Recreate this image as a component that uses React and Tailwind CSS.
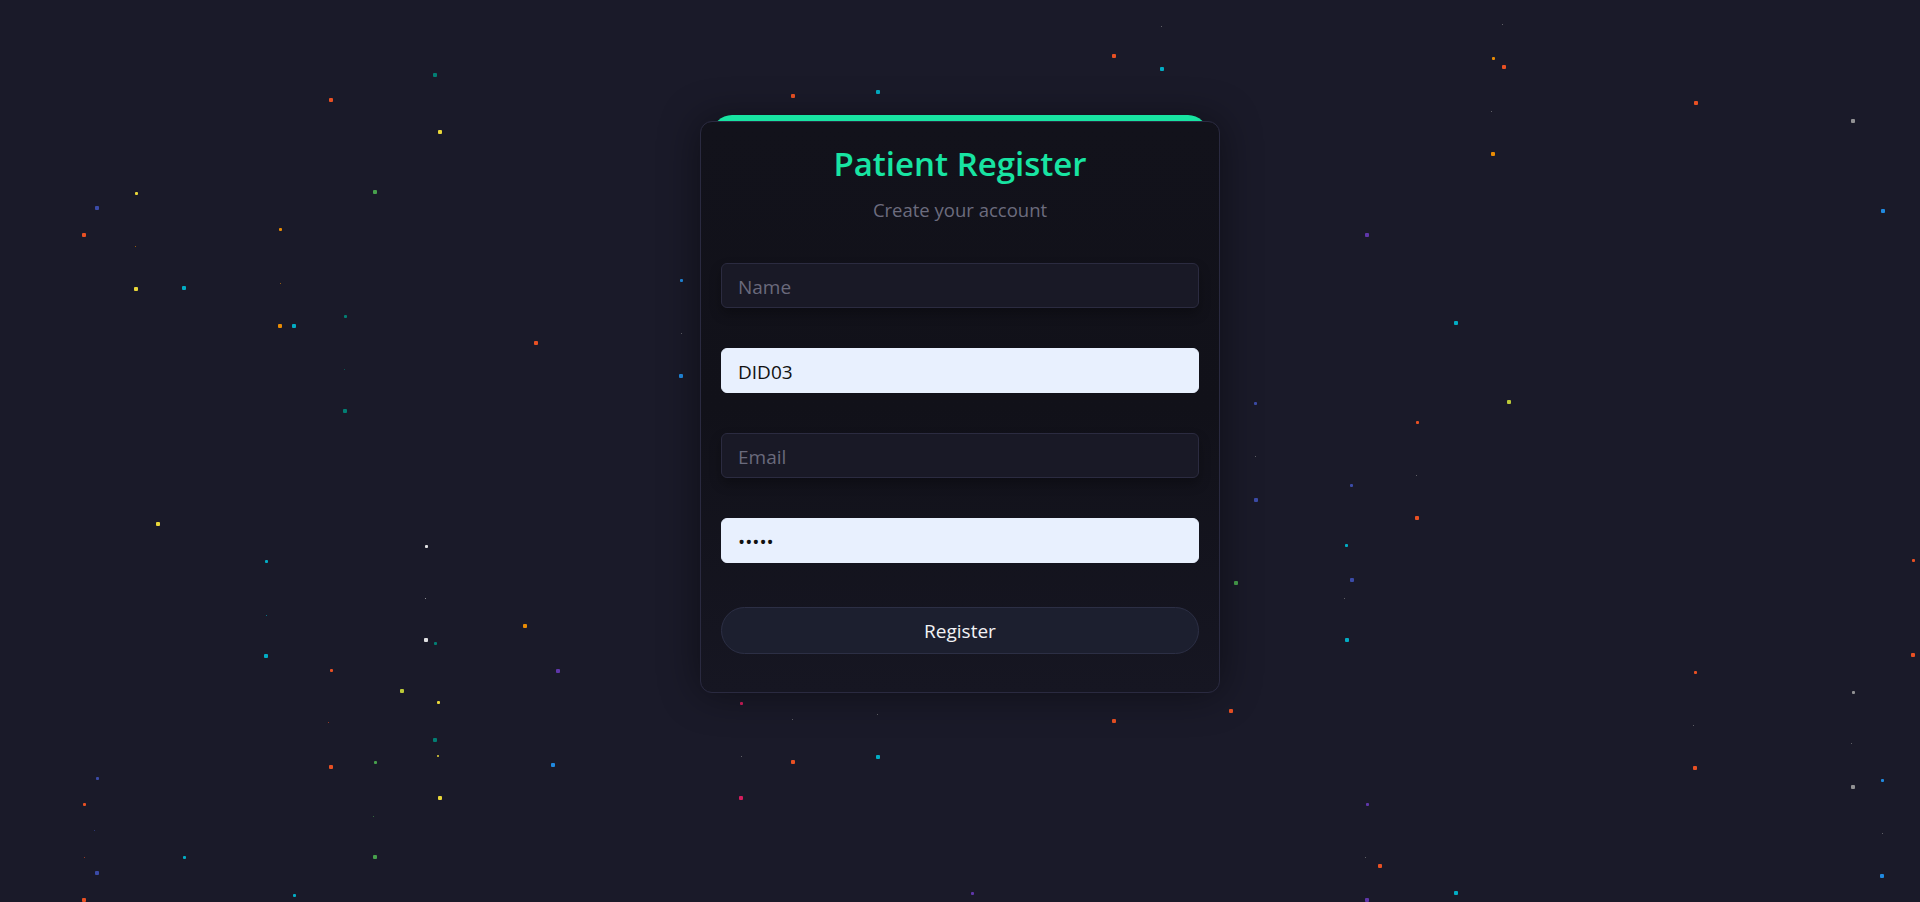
import React from "react";

const S = 1920 / 1568;

const C = {
  r: "#ff5722",
  o: "#ff9800",
  y: "#ffeb3b",
  g: "#4caf50",
  t: "#00897b",
  c: "#00bcd4",
  b: "#2196f3",
  i: "#3f51b5",
  p: "#673ab7",
  w: "#f5f5f5",
  k: "#9e9e9e",
  m: "#e91e63",
  l: "#cddc39",
};

// [x, y, colorKey, size] in 1568-wide reference coordinates
const DOTS = [
  [355, 61, "t", 4], [270, 82, "r", 4], [359, 108, "y", 4], [111, 158, "y", 3], [306, 157, "g", 4],
  [79, 170, "i", 4], [229, 187, "o", 3], [69, 192, "r", 4], [110, 201, "o", 1], [111, 236, "y", 4],
  [150, 235, "c", 4], [229, 266, "o", 4], [240, 266, "c", 4], [282, 258, "t", 3], [438, 280, "r", 4],
  [281, 301, "t", 1], [282, 336, "t", 4], [229, 231, "o", 1], [129, 428, "y", 4], [348, 446, "w", 3],
  [217, 458, "c", 3], [347, 488, "w", 1], [217, 502, "c", 1], [429, 511, "o", 4], [348, 523, "w", 4],
  [355, 525, "t", 3], [217, 536, "c", 4], [456, 548, "p", 4], [270, 547, "r", 3], [328, 564, "l", 4],
  [358, 573, "y", 3], [268, 590, "r", 1], [355, 604, "t", 4], [358, 617, "y", 2], [270, 626, "r", 4],
  [306, 622, "g", 3], [452, 625, "b", 4], [79, 635, "i", 3], [69, 657, "r", 3], [305, 666, "g", 1],
  [359, 652, "y", 4], [77, 678, "i", 1], [150, 700, "c", 3], [306, 700, "g", 4], [79, 713, "i", 4],
  [69, 700, "r", 1], [69, 735, "r", 4], [240, 731, "c", 3],
  [648, 78, "r", 4], [717, 75, "c", 4], [910, 46, "r", 4], [949, 56, "c", 4], [948, 21, "k", 1],
  [556, 229, "b", 3], [556, 272, "k", 1], [556, 307, "b", 4], [605, 574, "m", 3], [647, 587, "k", 1],
  [716, 583, "k", 1], [605, 617, "k", 1], [648, 622, "r", 4], [717, 618, "c", 4], [605, 652, "m", 4],
  [794, 729, "p", 3], [910, 589, "r", 4], [1005, 581, "r", 4], [1009, 476, "g", 4],
  [1227, 20, "k", 1], [1219, 47, "o", 3], [1228, 55, "r", 4], [1218, 91, "k", 1], [1219, 126, "o", 4],
  [1385, 84, "r", 4], [1513, 99, "k", 4], [1538, 172, "b", 4], [1116, 192, "p", 4], [1189, 264, "c", 4],
  [1232, 328, "l", 4], [1025, 329, "i", 3], [1157, 345, "r", 3], [1025, 372, "k", 1], [1156, 388, "k", 1],
  [1026, 408, "i", 4], [1103, 396, "i", 3], [1157, 423, "r", 4], [1099, 445, "c", 3], [1104, 474, "i", 4],
  [1098, 488, "k", 1], [1100, 523, "c", 4], [1384, 549, "r", 3], [1562, 535, "r", 4], [1513, 565, "k", 3],
  [1383, 592, "k", 1], [1512, 607, "k", 1], [1384, 627, "r", 4], [1537, 637, "b", 3], [1513, 643, "k", 4],
  [1116, 657, "p", 3], [1115, 700, "k", 1], [1127, 707, "r", 4], [1189, 729, "c", 4], [1537, 680, "k", 1],
  [1537, 715, "b", 4], [1562, 457, "r", 3], [1116, 735, "p", 4],
];

function Field({ placeholder, value, type = "text", filled }) {
  return (
    <input
      type={type}
      readOnly
      defaultValue={value}
      placeholder={placeholder}
      className={
        filled
          ? "block h-[45px] w-full rounded-md border border-[#e8f0fe] bg-[#e8f0fe] px-4 pt-[2px] text-[19px] text-[#111] outline-none"
          : "block h-[45px] w-full rounded-md border border-[#2b2b40] bg-[#191926] px-4 pt-[2px] text-[19px] text-[#d0d0dc] placeholder-[#6a6a7c] shadow-[0_6px_12px_rgba(0,0,0,0.28)] outline-none"
      }
      style={{ fontFamily: '"Open Sans", "Noto Sans", sans-serif' }}
    />
  );
}

export default function App() {
  return (
    <div
      className="relative h-[902px] w-full overflow-hidden bg-[#1a1a29]"
      style={{ fontFamily: '"Open Sans", "Noto Sans", sans-serif' }}
    >
      {DOTS.map(([x, y, c, s], i) => (
        <span
          key={i}
          className="absolute rounded-[1px]"
          style={{
            left: Math.round(x * S) - s / 2,
            top: Math.round(y * S) - s / 2,
            width: s,
            height: s,
            backgroundColor: C[c],
            opacity: s === 1 ? 0.7 : 0.9,
          }}
        />
      ))}

      <div className="relative flex justify-center pt-[121px]">
        <div className="relative w-[520px]">
          <div className="absolute inset-0 rounded-xl shadow-[0_0_40px_rgba(0,0,0,0.45)]" />
          <div className="absolute -top-[6px] left-[12px] right-[12px] h-[40px] rounded-t-[20px] bg-[#18e4a2]" />
          <div className="relative rounded-xl border border-[#2a2a40] bg-gradient-to-b from-[#12121b] via-[#111119] to-[#161622] px-5 pb-[38px] pt-[22px]">
            <h1 className="text-center text-[33px] font-semibold leading-[40px] text-[#18e4a2]">
              Patient Register
            </h1>
            <p className="mt-[14px] text-center text-[18.5px] leading-[24px] text-[#6c6c7e]">
              Create your account
            </p>
            <form className="mt-[41px] flex flex-col gap-[40px]">
              <Field placeholder="Name" />
              <Field value="DID03" filled />
              <Field placeholder="Email" />
              <Field value="aaaaa" type="password" filled />
              <button
                type="button"
                className="mt-[4px] h-[47px] w-full rounded-full border border-[#2c2f45] bg-[#1c1f2f] pt-[1px] text-[19px] text-[#f2f2f5]"
              >
                Register
              </button>
            </form>
          </div>
        </div>
      </div>
    </div>
  );
}
